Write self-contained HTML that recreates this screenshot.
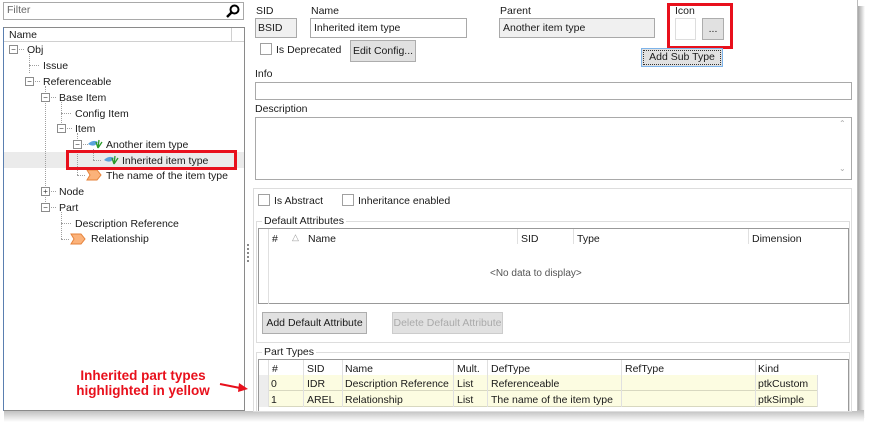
<!DOCTYPE html>
<html><head><meta charset="utf-8"><style>
*{box-sizing:border-box;margin:0;padding:0}
body{width:870px;height:434px;background:#fff;position:relative;overflow:hidden;font-family:"Liberation Sans",sans-serif;font-size:10.5px;color:#1a1a1a}
.a{position:absolute}
.box{position:absolute;border:1px solid #a9a9a9;background:#fff}
.btn{position:absolute;border:1px solid #adadad;background:#e1e1e1;text-align:center;font-size:10.5px}
.cb{position:absolute;width:12px;height:12px;border:1px solid #a0a0a0;background:#fff}
.t{position:absolute;white-space:nowrap}
.dl{position:absolute;border-left:1px dotted #a0a0a0}
.dh{position:absolute;border-top:1px dotted #a0a0a0;width:10px}
.pm{position:absolute;width:9px;height:9px;border:1px solid #8c8c8c;background:#fff;font-size:8px;line-height:7px;text-align:center;color:#333}
.vs{position:absolute;border-left:1px solid #e0e0e0}
.red{position:absolute;border:3px solid #e8101c}
.yel{position:absolute;background:#fcfce1;border-bottom:1px solid #d8d8c0}
.tr .t{margin-top:1px}
</style></head><body>
<div class="a" style="left:857px;top:6px;width:8px;height:412px;background:linear-gradient(90deg,#999,#fff)"></div>
<div class="a" style="left:4px;top:410px;width:860px;height:12px;background:linear-gradient(#bbb,#fff)"></div>
<div class="a" style="left:0;top:0;width:858px;height:411px;background:#fff;border-right:1px solid #bbb"></div>

<div class="box" style="left:3px;top:2px;width:241px;height:18px"></div>
<div class="t" style="left:7px;top:4px;color:#666">Filter</div>
<svg class="a" style="left:225px;top:3px" width="16" height="16"><circle cx="9.5" cy="6.5" r="4" fill="none" stroke="#000" stroke-width="2"/><line x1="6.5" y1="9.5" x2="2" y2="14" stroke="#000" stroke-width="2.5"/></svg>
<div class="box" style="left:3px;top:27px;width:242px;height:384px;border-color:#8a8a8a;border-left-color:#5a7fb0"></div>
<div class="a" style="left:4px;top:28px;width:240px;height:14px;border-bottom:1px solid #d0d0d0"></div>
<div class="a" style="left:231px;top:28px;height:14px;border-left:1px solid #d0d0d0"></div>
<div class="t" style="left:9px;top:29px">Name</div>
<div class="a" style="left:4px;top:152px;width:240px;height:16px;background:#ebebeb"></div>

<div class="dl" style="left:29px;top:54px;height:19px"></div>
<div class="dl" style="left:45px;top:86px;height:124px"></div>
<div class="dl" style="left:61px;top:102px;height:31px"></div>
<div class="dl" style="left:77px;top:133px;height:42px"></div>
<div class="dl" style="left:93px;top:149px;height:11px"></div>
<div class="dl" style="left:61px;top:212px;height:27px"></div>

<div class="pm" style="left:9px;top:45px">−</div><div class="dh" style="left:19px;top:49px;width:5px"></div>
<div class="dh" style="left:29px;top:65px"></div>
<div class="pm" style="left:25px;top:77px">−</div><div class="dh" style="left:35px;top:81px;width:5px"></div>
<div class="pm" style="left:41px;top:93px">−</div><div class="dh" style="left:51px;top:97px;width:5px"></div>
<div class="dh" style="left:61px;top:113px"></div>
<div class="pm" style="left:57px;top:124px">−</div><div class="dh" style="left:67px;top:128px;width:5px"></div>
<div class="pm" style="left:73px;top:140px">−</div><div class="dh" style="left:83px;top:144px;width:5px"></div>
<div class="dh" style="left:93px;top:160px;width:8px"></div>
<div class="dh" style="left:77px;top:175px;width:8px"></div>
<div class="pm" style="left:41px;top:187px">+</div><div class="dh" style="left:51px;top:191px;width:5px"></div>
<div class="pm" style="left:41px;top:203px">−</div><div class="dh" style="left:51px;top:207px;width:5px"></div>
<div class="dh" style="left:61px;top:223px"></div>
<div class="dh" style="left:61px;top:239px;width:8px"></div>

<svg class="a" style="left:87px;top:138px" width="16" height="12"><path d="M1 6 Q6 1 11 4 Q8 10 1 6Z" fill="#5aa3dc"/><path d="M11 10 L12 2 M11 10 L15 4 M11 10 L9 4" stroke="#2a9a2a" stroke-width="1.3" fill="none"/></svg>
<svg class="a" style="left:103px;top:154px" width="16" height="12"><path d="M1 6 Q6 1 11 4 Q8 10 1 6Z" fill="#5aa3dc"/><path d="M11 10 L12 2 M11 10 L15 4 M11 10 L9 4" stroke="#2a9a2a" stroke-width="1.3" fill="none"/></svg>
<svg class="a" style="left:86px;top:169px" width="16" height="12"><path d="M1 1 H11 L15 6 L11 11 H1 L4 6Z" fill="#fbb27a" stroke="#e6823a"/></svg>
<svg class="a" style="left:70px;top:233px" width="16" height="12"><path d="M1 1 H11 L15 6 L11 11 H1 L4 6Z" fill="#fbb27a" stroke="#e6823a"/></svg>

<div class="tr">
<div class="t" style="left:27px;top:43px">Obj</div>
<div class="t" style="left:43px;top:59px">Issue</div>
<div class="t" style="left:43px;top:75px">Referenceable</div>
<div class="t" style="left:59px;top:91px">Base Item</div>
<div class="t" style="left:75px;top:107px">Config Item</div>
<div class="t" style="left:75px;top:122px">Item</div>
<div class="t" style="left:106px;top:138px">Another item type</div>
<div class="t" style="left:122px;top:154px">Inherited item type</div>
<div class="t" style="left:106px;top:169px">The name of the item type</div>
<div class="t" style="left:59px;top:185px">Node</div>
<div class="t" style="left:59px;top:201px">Part</div>
<div class="t" style="left:75px;top:217px">Description Reference</div>
<div class="t" style="left:91px;top:232px">Relationship</div>
</div>
<div class="red" style="left:66px;top:150px;width:171px;height:20px"></div>
<div class="a" style="left:247px;top:244px;height:18px;border-left:2px dotted #888"></div>

<div class="t" style="left:70px;top:368px;color:#e8101c;font-weight:bold;font-size:13.5px;line-height:15px;text-align:center;width:146px">Inherited part types<br>highlighted in yellow</div>
<svg class="a" style="left:218px;top:380px" width="32" height="14"><line x1="2" y1="4" x2="22" y2="8" stroke="#e8101c" stroke-width="2"/><path d="M21 3 L30 9 L20 12Z" fill="#e8101c"/></svg>

<div class="t" style="left:256px;top:5px">SID</div>
<div class="box" style="left:255px;top:18px;width:42px;height:20px;background:#f0f0f0"></div><div class="t" style="left:258px;top:22px">BSID</div>
<div class="t" style="left:311px;top:5px">Name</div>
<div class="box" style="left:310px;top:18px;width:157px;height:20px"></div><div class="t" style="left:314px;top:22px">Inherited item type</div>
<div class="t" style="left:500px;top:5px">Parent</div>
<div class="box" style="left:499px;top:18px;width:156px;height:20px;background:#f0f0f0"></div><div class="t" style="left:503px;top:22px">Another item type</div>
<div class="t" style="left:675px;top:5px">Icon</div>
<div class="box" style="left:675px;top:18px;width:21px;height:22px;border-color:#ddd"></div>
<div class="btn" style="left:702px;top:18px;width:22px;height:22px;line-height:20px">...</div>
<div class="red" style="left:667px;top:3px;width:66px;height:46px"></div>
<div class="cb" style="left:260px;top:43px"></div><div class="t" style="left:276px;top:44px">Is Deprecated</div>
<div class="btn" style="left:350px;top:40px;width:66px;height:22px;line-height:20px">Edit Config...</div>
<div class="btn" style="left:641px;top:48px;width:82px;height:19px;line-height:17px;border:1px solid #7eb4ea;outline:1px dotted #333;outline-offset:-3px">Add Sub Type</div>
<div class="t" style="left:255px;top:68px">Info</div>
<div class="box" style="left:255px;top:82px;width:597px;height:18px"></div>
<div class="t" style="left:255px;top:103px">Description</div>
<div class="box" style="left:255px;top:117px;width:597px;height:63px"></div>
<div class="t" style="left:839px;top:119px;color:#aaa;font-size:8px">⌃</div>
<div class="t" style="left:839px;top:164px;color:#aaa;font-size:8px">⌄</div>

<div class="box" style="left:253px;top:188px;width:599px;height:224px;border-color:#ddd"></div>
<div class="cb" style="left:258px;top:194px"></div><div class="t" style="left:274px;top:195px">Is Abstract</div>
<div class="cb" style="left:342px;top:194px"></div><div class="t" style="left:358px;top:195px">Inheritance enabled</div>

<div class="box" style="left:256px;top:221px;width:594px;height:122px;border-color:#ddd"></div>
<div class="t" style="left:262px;top:215px;background:#fff;padding:0 2px">Default Attributes</div>
<div class="box" style="left:258px;top:228px;width:591px;height:76px;border-color:#999"></div>
<div class="vs" style="left:268px;top:229px;height:75px"></div>
<div class="t" style="left:272px;top:233px">#</div><div class="t" style="left:292px;top:232px;color:#999;font-size:9px">△</div>
<div class="t" style="left:308px;top:233px">Name</div><div class="vs" style="left:517px;top:229px;height:15px"></div>
<div class="t" style="left:521px;top:233px">SID</div><div class="vs" style="left:573px;top:229px;height:15px"></div>
<div class="t" style="left:577px;top:233px">Type</div><div class="vs" style="left:748px;top:229px;height:15px"></div>
<div class="t" style="left:752px;top:233px">Dimension</div>
<div class="t" style="left:490px;top:268px;color:#555;font-size:10px">&lt;No data to display&gt;</div>
<div class="btn" style="left:262px;top:312px;width:105px;height:22px;line-height:20px">Add Default Attribute</div>
<div class="btn" style="left:392px;top:312px;width:111px;height:22px;line-height:20px;color:#aaa;border-color:#ccc;overflow:hidden">Delete Default Attribute</div>

<div class="box" style="left:256px;top:352px;width:594px;height:60px;border-color:#ddd"></div>
<div class="t" style="left:262px;top:346px;background:#fff;padding:0 2px">Part Types</div>
<div class="box" style="left:258px;top:359px;width:591px;height:52px;border-color:#999;border-bottom:none"></div>
<div class="a" style="left:259px;top:375px;width:9px;height:32px;background:#ededed"></div>
<div class="yel" style="left:268px;top:375px;width:549px;height:16px"></div>
<div class="yel" style="left:268px;top:391px;width:549px;height:16px"></div>
<div class="vs" style="left:268px;top:360px;height:47px"></div>
<div class="vs" style="left:303px;top:360px;height:47px"></div>
<div class="vs" style="left:342px;top:360px;height:47px"></div>
<div class="vs" style="left:453px;top:360px;height:47px"></div>
<div class="vs" style="left:487px;top:360px;height:47px"></div>
<div class="vs" style="left:621px;top:360px;height:47px"></div>
<div class="vs" style="left:755px;top:360px;height:47px"></div>
<div class="vs" style="left:817px;top:375px;height:32px"></div>
<div class="t" style="left:272px;top:363px">#</div><div class="t" style="left:307px;top:363px">SID</div><div class="t" style="left:345px;top:363px">Name</div><div class="t" style="left:457px;top:363px">Mult.</div><div class="t" style="left:491px;top:363px">DefType</div><div class="t" style="left:625px;top:363px">RefType</div><div class="t" style="left:758px;top:363px">Kind</div>
<div class="t" style="left:271px;top:378px">0</div><div class="t" style="left:307px;top:378px">IDR</div><div class="t" style="left:345px;top:378px">Description Reference</div><div class="t" style="left:457px;top:378px">List</div><div class="t" style="left:491px;top:378px">Referenceable</div><div class="t" style="left:758px;top:378px">ptkCustom</div>
<div class="t" style="left:271px;top:394px">1</div><div class="t" style="left:307px;top:394px">AREL</div><div class="t" style="left:345px;top:394px">Relationship</div><div class="t" style="left:457px;top:394px">List</div><div class="t" style="left:491px;top:394px">The name of the item type</div><div class="t" style="left:758px;top:394px">ptkSimple</div>
</body></html>
